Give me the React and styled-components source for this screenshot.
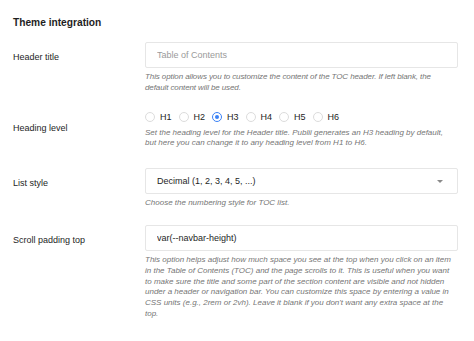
import React from "react";
import styled, { createGlobalStyle } from "styled-components";

const GlobalStyle = createGlobalStyle`
  html, body {
    margin: 0;
    padding: 0;
    background: #ffffff;
  }
  body {
    font-family: "Liberation Sans", Arial, sans-serif;
    color: #1e1e1e;
  }
`;

const Page = styled.div`
  width: 474px;
  height: 341px;
  overflow: hidden;
  padding: 16px 16px 0 13px;
  box-sizing: border-box;
`;

const Title = styled.h2`
  margin: 0 0 12px;
  font-size: 10.2px;
  line-height: 14px;
  font-weight: 700;
  color: #1e1e1e;
`;

const Row = styled.div`
  display: flex;
  margin-bottom: ${(p) => p.$gap}px;
`;

const Label = styled.div`
  width: 132px;
  flex-shrink: 0;
  font-size: 9px;
  line-height: 12px;
  padding-top: ${(p) => p.$top}px;
  color: #1e1e1e;
`;

const Field = styled.div`
  flex: 1;
  display: flex;
  flex-direction: column;
`;

const TextInput = styled.input`
  height: 26px;
  box-sizing: border-box;
  border: 1px solid #e6e6e6;
  border-radius: 2px;
  padding: 0 11px;
  font-family: inherit;
  font-size: 9px;
  color: #1e1e1e;
  outline: none;
  &::placeholder {
    color: #9a9a9a;
  }
`;

const Select = styled.div`
  height: 26px;
  box-sizing: border-box;
  border: 1px solid #e6e6e6;
  border-radius: 2px;
  padding: 0 11px;
  display: flex;
  align-items: center;
  justify-content: space-between;
  font-size: 9px;
  color: #1e1e1e;
`;

const Caret = styled.span`
  width: 0;
  height: 0;
  border-left: 3px solid transparent;
  border-right: 3px solid transparent;
  border-top: 3px solid #8a8a8a;
  margin-right: 3px;
`;

const Help = styled.p`
  margin: 4px 0 0;
  font-size: 8px;
  line-height: 10.8px;
  font-style: italic;
  color: #757575;
  letter-spacing: ${(p) => (p.$tight ? "-0.1px" : "normal")};
`;

const Radios = styled.div`
  display: flex;
  align-items: center;
  height: 14px;
  margin-top: 2px;
`;

const RadioItem = styled.label`
  display: flex;
  align-items: center;
  margin-right: 7px;
  font-size: 9px;
  font-weight: 500;
  color: #1e1e1e;
`;

const Circle = styled.span`
  width: 10px;
  height: 10px;
  box-sizing: border-box;
  border-radius: 50%;
  border: 1px solid ${(p) => (p.$on ? "#3b82f6" : "#dcdcdc")};
  margin-right: 5px;
  display: flex;
  align-items: center;
  justify-content: center;
  &::after {
    content: "";
    width: 4px;
    height: 4px;
    border-radius: 50%;
    background: ${(p) => (p.$on ? "#3b82f6" : "transparent")};
  }
`;

const levels = ["H1", "H2", "H3", "H4", "H5", "H6"];

export default function App() {
  return (
    <Page>
      <GlobalStyle />
      <Title>Theme integration</Title>

      <Row $gap={14}>
        <Label $top={9}>Header title</Label>
        <Field>
          <TextInput placeholder="Table of Contents" />
          <Help $tight>
            This option allows you to customize the content of the TOC header. If left blank, the
            <br />
            default content will be used.
          </Help>
        </Field>
      </Row>

      <Row $gap={19}>
        <Label $top={14}>Heading level</Label>
        <Field>
          <Radios>
            {levels.map((l) => (
              <RadioItem key={l}>
                <Circle $on={l === "H3"} />
                {l}
              </RadioItem>
            ))}
          </Radios>
          <Help>
            Set the heading level for the Header title. Publii generates an H3 heading by default,
            <br />
            but here you can change it to any heading level from H1 to H6.
          </Help>
        </Field>
      </Row>

      <Row $gap={16}>
        <Label $top={9}>List style</Label>
        <Field>
          <Select>
            <span>Decimal (1, 2, 3, 4, 5, ...)</span>
            <Caret />
          </Select>
          <Help>Choose the numbering style for TOC list.</Help>
        </Field>
      </Row>

      <Row $gap={0}>
        <Label $top={9}>Scroll padding top</Label>
        <Field>
          <TextInput defaultValue="var(--navbar-height)" />
          <Help>
            This option helps adjust how much space you see at the top when you click on an item
            in the Table of Contents (TOC) and the page scrolls to it. This is useful when you want
            to make sure the title and some part of the section content are visible and not hidden
            under a header or navigation bar. You can customize this space by entering a value in
            CSS units (e.g., 2rem or 2vh). Leave it blank if you don't want any extra space at the
            top.
          </Help>
        </Field>
      </Row>
    </Page>
  );
}
